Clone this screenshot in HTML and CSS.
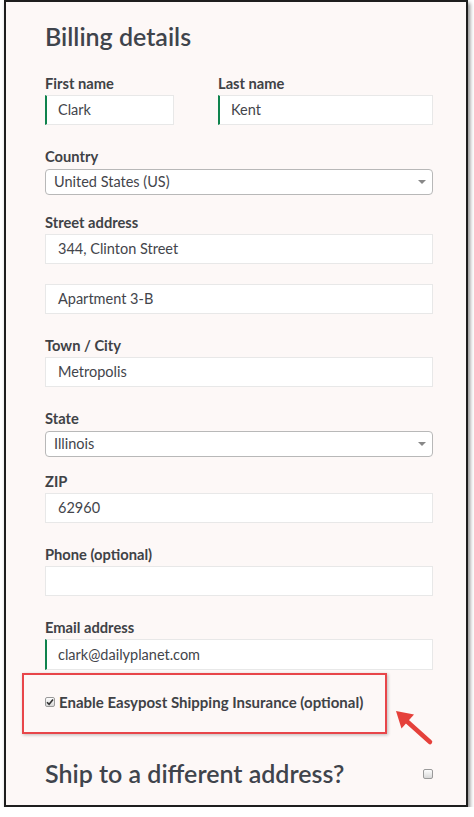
FILE: index.html
```html
<!DOCTYPE html>
<html lang="en">
<head>
<meta charset="utf-8">
<title>Billing details</title>
<link rel="stylesheet" href="styles.css">
</head>
<body>
<div class="frame">
  <h3 class="title">Billing details</h3>

  <div class="row-two">
    <div class="field">
      <label class="label">First name</label>
      <div class="input valid">Clark</div>
    </div>
    <div class="field">
      <label class="label">Last name</label>
      <div class="input valid">Kent</div>
    </div>
  </div>

  <div class="field field-select">
    <label class="label">Country</label>
    <div class="select">United States (US)<span class="caret"></span></div>
  </div>

  <div class="field field-tight">
    <label class="label">Street address</label>
    <div class="input">344, Clinton Street</div>
  </div>
  <div class="field">
    <div class="input">Apartment 3-B</div>
  </div>

  <div class="field">
    <label class="label">Town / City</label>
    <div class="input">Metropolis</div>
  </div>

  <div class="field field-select field-select-b">
    <label class="label">State</label>
    <div class="select">Illinois<span class="caret"></span></div>
  </div>

  <div class="field">
    <label class="label">ZIP</label>
    <div class="input">62960</div>
  </div>

  <div class="field">
    <label class="label">Phone (optional)</label>
    <div class="input"></div>
  </div>

  <div class="field field-last">
    <label class="label">Email address</label>
    <div class="input valid tall">clark@dailyplanet.com</div>
  </div>

  <div class="insurance">
    <span class="check checked">
      <svg width="8" height="8" viewBox="0 0 8 8"><path d="M1 4.2 L3.1 6.3 L7 1.6" fill="none" stroke="#333" stroke-width="1.6"/></svg>
    </span>
    <span class="insurance-text">Enable Easypost Shipping Insurance (optional)</span>
    <div class="highlight"></div>
    <svg class="arrow" width="50" height="50" viewBox="0 0 50 50">
      <line x1="16" y1="20.5" x2="40" y2="42" stroke="#e5413b" stroke-width="4.5" stroke-linecap="round"/>
      <polygon points="6,11 24,14.5 11.5,28.5" fill="#e5413b"/>
    </svg>
  </div>

  <div class="ship">
    <h3 class="title ship-title">Ship to a different address?</h3>
    <span class="check"></span>
  </div>
</div>
</body>
</html>
```
FILE: styles.css
```css
* { box-sizing: border-box; }
html, body { margin: 0; padding: 0; background: #ffffff; }
body { font-family: Lato, "Open Sans", "Liberation Sans", sans-serif; color: #43454b; }

.frame {
  margin-left: 4px;
  width: 464px;
  height: 807px;
  border: 2px solid #1e1e1e;
  background: #fdf8f7;
  padding: 18px 33px 0 39px;
  box-shadow: 2px 3px 4px rgba(0, 0, 0, 0.45);
}

.title {
  margin: 0 0 21px 0;
  font-size: 25px;
  line-height: 32px;
  font-weight: 600;
  color: #3f444c;
}

.row-two {
  display: grid;
  grid-template-columns: 129px 1fr;
  column-gap: 44px;
}
.row-two .field { margin-bottom: 21px; }

.field { margin-bottom: 21px; }
.field-tight { margin-bottom: 20px; }
.field-select { margin-bottom: 17px; }
.field-select .label { margin-bottom: 3px; }
.field-select-b { margin-bottom: 14px; }
.field-last { margin-bottom: 22px; }

.label {
  display: block;
  font-size: 14.7px;
  line-height: 20px;
  font-weight: 700;
  color: #404246;
  margin-bottom: 2px;
}

.input {
  height: 30px;
  background: #ffffff;
  border: 1px solid #e8e8e8;
  padding-left: 12px;
  font-size: 14.5px;
  line-height: 28px;
  color: #43454b;
}
.input.tall { height: 31px; line-height: 29px; }
.input.valid { border-left: 2px solid #0f834d; padding-left: 11px; }

.select {
  position: relative;
  height: 26px;
  background: #ffffff;
  border: 1px solid #b8b8b8;
  border-radius: 4px;
  padding-left: 8px;
  font-size: 14.5px;
  line-height: 24px;
  color: #43454b;
}
.caret {
  position: absolute;
  right: 6px;
  top: 10px;
  width: 0;
  height: 0;
  border-left: 4px solid transparent;
  border-right: 4px solid transparent;
  border-top: 4px solid #888888;
}

.insurance {
  position: relative;
  display: flex;
  align-items: center;
  gap: 4px;
  height: 20px;
}
.insurance-text {
  font-size: 15px;
  line-height: 20px;
  font-weight: 700;
  color: #404246;
}

.check {
  display: inline-flex;
  align-items: center;
  justify-content: center;
  width: 10px;
  height: 10px;
  border: 1px solid #9a9a9a;
  border-radius: 2px;
  background: linear-gradient(#fdfdfd, #d8d8d8);
  flex: none;
}

.highlight {
  position: absolute;
  left: -23px;
  top: -19px;
  width: 365px;
  height: 61px;
  border: 2px solid #e8464a;
  box-shadow: 1px 1px 3px rgba(0, 0, 0, 0.25);
  pointer-events: none;
}
.arrow {
  position: absolute;
  left: 345px;
  top: 8px;
}

.ship {
  margin-top: 45px;
  display: flex;
  align-items: center;
  justify-content: space-between;
}
.ship-title { margin: 0; }
.ship .check { margin-top: 2px; }
```
